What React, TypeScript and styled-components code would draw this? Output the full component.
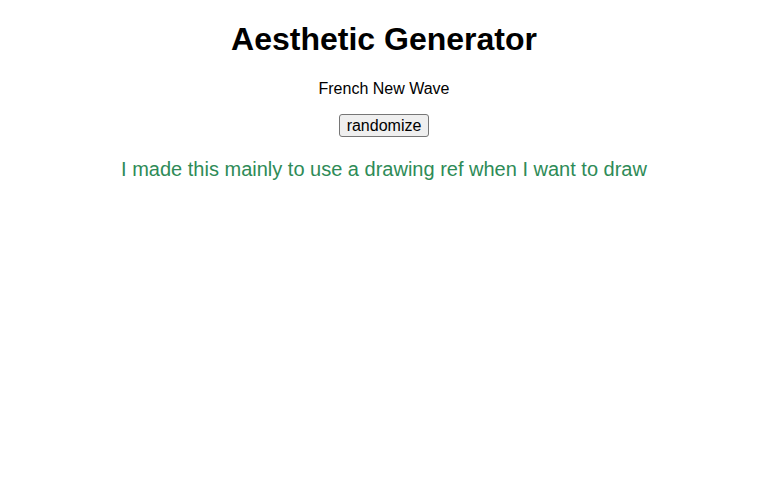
import React from "react";
import styled, { createGlobalStyle } from "styled-components";

const Global = createGlobalStyle`
  body {
    margin: 0;
    font-family: "Liberation Sans", Arial, sans-serif;
    background: #ffffff;
    color: #000000;
  }
`;

const Page = styled.div`
  display: block;
  text-align: center;
  padding: 0 8px;
`;

const Title = styled.h1`
  font-size: 32px;
  font-weight: bold;
  margin: 21.44px 0;
`;

const Aesthetic = styled.p`
  font-size: 16px;
  margin: 16px 0;
`;

const ButtonRow = styled.div`
  display: flex;
  justify-content: center;
`;

const RandomButton = styled.button`
  font-family: "Liberation Sans", Arial, sans-serif;
  font-size: 16px;
  line-height: 18px;
  padding: 2px 7px 1px;
  border: 1px solid #767676;
  border-radius: 3px;
  background: #efefef;
  color: #000;
`;

const Note = styled.p`
  font-size: 20px;
  color: #2e8b57;
  margin: 21px 0 20px;
`;

export default function App() {
  return (
    <>
      <Global />
      <Page>
        <Title>Aesthetic Generator</Title>
        <Aesthetic>French New Wave</Aesthetic>
        <ButtonRow>
          <RandomButton>randomize</RandomButton>
        </ButtonRow>
        <Note>I made this mainly to use a drawing ref when I want to draw</Note>
      </Page>
    </>
  );
}
